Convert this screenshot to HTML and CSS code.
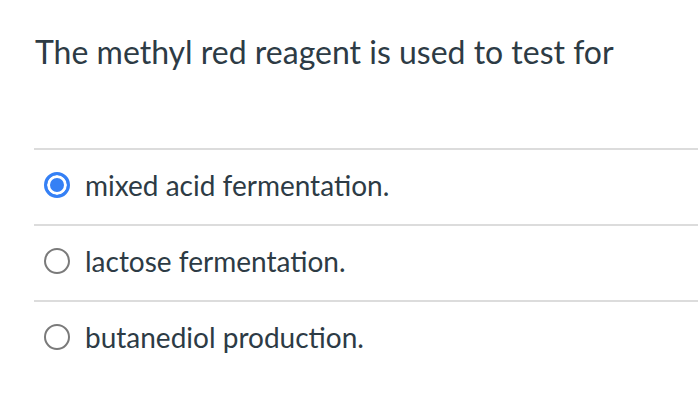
FILE: index.html
```html
<!DOCTYPE html>
<html>
<head>
<meta charset="utf-8">
<link rel="stylesheet" href="styles.css">
</head>
<body>
<div class="question">
  <div class="question-text">The methyl red reagent is used to test for</div>
  <div class="answers">
    <label class="answer">
      <span class="radio checked"></span>
      <span class="answer-text">mixed acid fermentation.</span>
    </label>
    <label class="answer">
      <span class="radio"></span>
      <span class="answer-text">lactose fermentation.</span>
    </label>
    <label class="answer">
      <span class="radio"></span>
      <span class="answer-text">butanediol production.</span>
    </label>
  </div>
</div>
</body>
</html>
```

FILE: styles.css
```css
html, body {
  margin: 0;
  padding: 0;
  background: #fff;
}
body {
  font-family: Lato, "Liberation Sans", sans-serif;
  color: #2d3b45;
}
.question {
  padding: 32px 0 0 34px;
}
.question-text {
  font-size: 32px;
  line-height: 40px;
  padding-left: 1px;
}
.answers {
  margin-top: 76px;
  border-top: 2px solid #dcdcdc;
}
.answer {
  display: flex;
  align-items: center;
  height: 74px;
  border-bottom: 2px solid #dcdcdc;
  padding-left: 10px;
}
.answer:last-child {
  border-bottom: none;
}
.radio {
  box-sizing: border-box;
  width: 26px;
  height: 26px;
  border-radius: 50%;
  border: 2px solid #7a7a7a;
  margin-right: 15px;
  flex: none;
  margin-top: -5px;
}
.radio.checked {
  border: 3px solid #3580f5;
  background: #3580f5;
  box-shadow: inset 0 0 0 3px #fff;
}
.answer-text {
  font-size: 28px;
  margin-top: -5px;
}
```
